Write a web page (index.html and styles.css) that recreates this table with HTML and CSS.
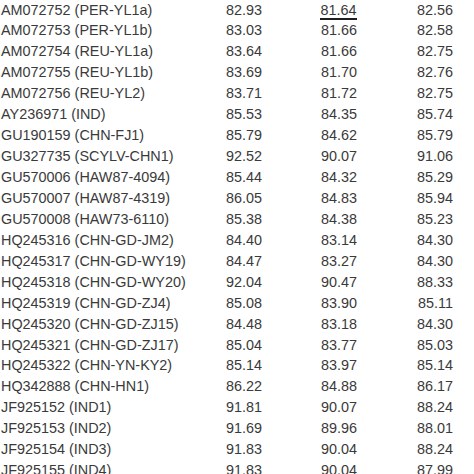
FILE: index.html
```html
<!DOCTYPE html>
<html>
<head>
<meta charset="utf-8">
<link rel="stylesheet" href="styles.css">
</head>
<body>
<div class="table">
  <div class="row"><span class="name">AM072752 (PER-YL1a)</span><span class="num">82.93</span><span class="num"><span class="ul">81.64</span></span><span class="num">82.56</span></div>
  <div class="row"><span class="name">AM072753 (PER-YL1b)</span><span class="num">83.03</span><span class="num">81.66</span><span class="num">82.58</span></div>
  <div class="row"><span class="name">AM072754 (REU-YL1a)</span><span class="num">83.64</span><span class="num">81.66</span><span class="num">82.75</span></div>
  <div class="row"><span class="name">AM072755 (REU-YL1b)</span><span class="num">83.69</span><span class="num">81.70</span><span class="num">82.76</span></div>
  <div class="row"><span class="name">AM072756 (REU-YL2)</span><span class="num">83.71</span><span class="num">81.72</span><span class="num">82.75</span></div>
  <div class="row"><span class="name">AY236971 (IND)</span><span class="num">85.53</span><span class="num">84.35</span><span class="num">85.74</span></div>
  <div class="row"><span class="name">GU190159 (CHN-FJ1)</span><span class="num">85.79</span><span class="num">84.62</span><span class="num">85.79</span></div>
  <div class="row"><span class="name">GU327735 (SCYLV-CHN1)</span><span class="num">92.52</span><span class="num">90.07</span><span class="num">91.06</span></div>
  <div class="row"><span class="name">GU570006 (HAW87-4094)</span><span class="num">85.44</span><span class="num">84.32</span><span class="num">85.29</span></div>
  <div class="row"><span class="name">GU570007 (HAW87-4319)</span><span class="num">86.05</span><span class="num">84.83</span><span class="num">85.94</span></div>
  <div class="row"><span class="name">GU570008 (HAW73-6110)</span><span class="num">85.38</span><span class="num">84.38</span><span class="num">85.23</span></div>
  <div class="row"><span class="name">HQ245316 (CHN-GD-JM2)</span><span class="num">84.40</span><span class="num">83.14</span><span class="num">84.30</span></div>
  <div class="row"><span class="name">HQ245317 (CHN-GD-WY19)</span><span class="num">84.47</span><span class="num">83.27</span><span class="num">84.30</span></div>
  <div class="row"><span class="name">HQ245318 (CHN-GD-WY20)</span><span class="num">92.04</span><span class="num">90.47</span><span class="num">88.33</span></div>
  <div class="row"><span class="name">HQ245319 (CHN-GD-ZJ4)</span><span class="num">85.08</span><span class="num">83.90</span><span class="num">85.11</span></div>
  <div class="row"><span class="name">HQ245320 (CHN-GD-ZJ15)</span><span class="num">84.48</span><span class="num">83.18</span><span class="num">84.30</span></div>
  <div class="row"><span class="name">HQ245321 (CHN-GD-ZJ17)</span><span class="num">85.04</span><span class="num">83.77</span><span class="num">85.03</span></div>
  <div class="row"><span class="name">HQ245322 (CHN-YN-KY2)</span><span class="num">85.14</span><span class="num">83.97</span><span class="num">85.14</span></div>
  <div class="row"><span class="name">HQ342888 (CHN-HN1)</span><span class="num">86.22</span><span class="num">84.88</span><span class="num">86.17</span></div>
  <div class="row"><span class="name">JF925152 (IND1)</span><span class="num">91.81</span><span class="num">90.07</span><span class="num">88.24</span></div>
  <div class="row"><span class="name">JF925153 (IND2)</span><span class="num">91.69</span><span class="num">89.96</span><span class="num">88.01</span></div>
  <div class="row"><span class="name">JF925154 (IND3)</span><span class="num">91.83</span><span class="num">90.04</span><span class="num">88.24</span></div>
  <div class="row"><span class="name">JF925155 (IND4)</span><span class="num">91.83</span><span class="num">90.04</span><span class="num">87.99</span></div>
</div>
</body>
</html>
```
FILE: styles.css
```css
html, body {
  margin: 0;
  padding: 0;
  background: #ffffff;
}
body {
  font-family: "Liberation Sans", Arial, sans-serif;
  font-size: 14.4px;
  color: #3a3a3a;
  overflow: hidden;
  width: 474px;
  height: 474px;
}
.table {
  display: flex;
  flex-direction: column;
  padding-left: 1px;
  margin-top: -0.5px;
}
.row {
  display: grid;
  grid-template-columns: 199px 62px 95px 96px;
  height: 20.95px;
  line-height: 20.95px;
  white-space: nowrap;
}
.num {
  text-align: right;
}
.ul {
  display: inline-block;
  position: relative;
  padding: 0 0.5px;
}
.ul::after {
  content: "";
  position: absolute;
  left: 0;
  right: 0;
  top: 18px;
  height: 2px;
  background: #1e1e1e;
}
```
